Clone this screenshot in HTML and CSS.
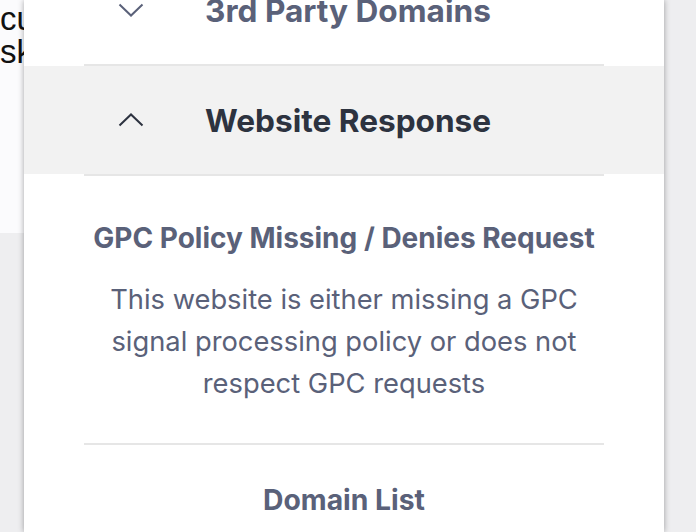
FILE: index.html
```html
<!DOCTYPE html>
<html lang="en">
<head>
<meta charset="utf-8">
<link rel="stylesheet" href="styles.css">
<title>GPC</title>
</head>
<body>
<div class="page">
  <div class="card">
    <p class="card-line">customize</p>
    <p class="card-line">sked</p>
  </div>
</div>
<aside class="drawer">
  <div class="drawer-scroll">
    <section class="acc">
      <div class="acc-head">
        <svg class="chev" width="26" height="14" viewBox="0 0 26 14"><path d="M1.5 1.5 L13 12.5 L24.5 1.5" fill="none" stroke="currentColor" stroke-width="2"/></svg>
        <span class="acc-title">3rd Party Domains</span>
      </div>
      <hr class="rule">
    </section>
    <section class="acc open">
      <div class="acc-head">
        <svg class="chev" width="26" height="14" viewBox="0 0 26 14"><path d="M1.5 12.5 L13 1.5 L24.5 12.5" fill="none" stroke="currentColor" stroke-width="2"/></svg>
        <span class="acc-title">Website Response</span>
      </div>
      <hr class="rule">
      <div class="acc-body">
        <h3 class="resp-title">GPC Policy Missing / Denies Request</h3>
        <p class="resp-text">This website is either missing a GPC signal processing policy or does not respect GPC requests</p>
      </div>
      <hr class="rule">
    </section>
    <h2 class="list-title">Domain List</h2>
  </div>
</aside>
</body>
</html>
```
FILE: styles.css
```css
html, body {
  margin: 0;
  padding: 0;
  height: 100%;
  overflow: hidden;
}
body {
  background: #eeeef0;
  font-family: Inter, "Noto Sans", sans-serif;
}
.page {
  height: 100%;
}
.card {
  width: 300px;
  height: 233px;
  background: #fbfbfd;
  padding-top: 2px;
  box-sizing: border-box;
}
.card-line {
  margin: 0;
  font-family: "Liberation Sans", Arial, sans-serif;
  font-size: 33px;
  line-height: 33px;
  color: #111;
}
.drawer {
  position: absolute;
  top: 0;
  left: 24px;
  width: 640px;
  height: 100%;
  background: #ffffff;
  box-shadow: 0 0 6px rgba(0,0,0,0.35);
  overflow: hidden;
}
.drawer-scroll {
  margin-top: -44px;
}
.acc-head {
  height: 108px;
  display: flex;
  align-items: center;
  padding-left: 94px;
}
.open .acc-head {
  background: #f2f2f2;
}
.chev {
  color: #5a6179;
  display: block;
}
.open .chev {
  color: #2d3340;
}
.acc-title {
  margin-left: 61px;
  font-size: 31.6px;
  font-weight: 700;
  color: #5a6179;
}
.open .acc-title {
  color: #2d3340;
}
.rule {
  margin: 0 60px;
  height: 2px;
  border: 0;
  background: #e6e6e6;
}
.acc-body {
  text-align: center;
  padding: 46px 40px 38px;
  color: #5a6179;
}
.resp-title {
  margin: 0 0 25px;
  font-size: 28px;
  font-weight: 700;
  line-height: 32px;
  white-space: nowrap;
}
.resp-text {
  margin: 0;
  font-size: 27.3px;
  line-height: 42px;
  padding: 0 20px;
}
.list-title {
  margin: 38px 0 0;
  text-align: center;
  font-size: 28.3px;
  line-height: 34px;
  font-weight: 700;
  color: #5a6179;
}
```
